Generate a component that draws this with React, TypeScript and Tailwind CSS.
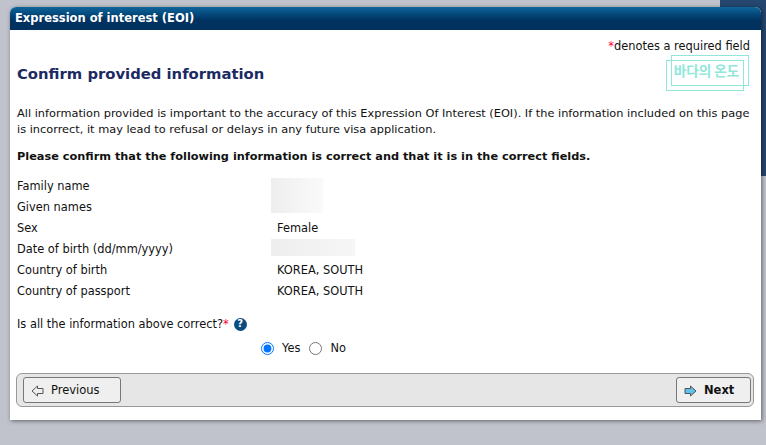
import React from 'react';

const fontStack = { fontFamily: '"DejaVu Sans", Verdana, sans-serif' };

const rows = [
  { label: 'Family name', value: '' },
  { label: 'Given names', value: '' },
  { label: 'Sex', value: 'Female' },
  { label: 'Date of birth (dd/mm/yyyy)', value: '' },
  { label: 'Country of birth', value: 'KOREA, SOUTH' },
  { label: 'Country of passport', value: 'KOREA, SOUTH' },
];

const ArrowLeft = () => (
  <svg width="13" height="12" viewBox="0 0 13 12">
    <path d="M1 6 L6.5 1 V3.5 H12 V8.5 H6.5 V11 Z" fill="#efefef" stroke="#555" strokeWidth="1" />
  </svg>
);

const ArrowRight = () => (
  <svg width="13" height="12" viewBox="0 0 13 12">
    <path d="M12 6 L6.5 1 V3.5 H1 V8.5 H6.5 V11 Z" fill="#5fc0ea" stroke="#555" strokeWidth="1" />
  </svg>
);

export default function App() {
  return (
    <div className="relative h-[445px] w-[766px] overflow-hidden bg-[#c0c3cc] pt-[7px] pl-[10px] pr-[5px] text-[11.4px] text-[#111]" style={fontStack}>
      {/* top right backdrop */}
      <div className="absolute right-0 top-0 h-[176px] w-[46px] bg-[#24466f]" />

      <div className="relative h-[413px] w-[751px] rounded-t-[6px] bg-white shadow-[1px_1px_4px_rgba(0,0,0,0.5)]">
        <div className="flex h-[23px] items-center rounded-t-[6px] bg-gradient-to-b from-[#0f659b] to-[#00315f] to-60% pl-[5px] text-[11.5px] font-bold text-white">
          Expression of interest (EOI)
        </div>

        <div className="px-[7px]">
          <div className="pt-[9px] pr-[4px] text-right leading-[15px]">
            <span className="text-[#ff0033]">*</span>denotes a required field
          </div>

          <h1 className="mt-[6px] text-[14.8px] font-bold leading-[28px] text-[#1b2a63]">Confirm provided information</h1>

          <p className="mt-[17px] text-[11.35px] leading-[16px]">
            All information provided is important to the accuracy of this Expression Of Interest (EOI). If the information included on this page is incorrect, it may lead to refusal or delays in any future visa application.
          </p>

          <p className="mt-[12px] text-[11.3px] font-bold leading-[16px]">
            Please confirm that the following information is correct and that it is in the correct fields.
          </p>

          <div className="mt-[11px] flex flex-col">
            {rows.map((row) => (
              <div key={row.label} className="flex h-[21px] items-center">
                <div className="w-[260px]">{row.label}</div>
                <div>{row.value}</div>
              </div>
            ))}
          </div>

          <div className="mt-[14px] flex items-center leading-[16px]">
            Is all the information above correct?<span className="text-[#ff0033]">*</span>
            <span className="ml-[5px] flex h-[13px] w-[13px] items-center justify-center rounded-full bg-[#0b4c7f] text-[10px] font-bold text-white">?</span>
          </div>

          <div className="mt-[8px] flex items-center pl-[244px]">
            <input type="radio" defaultChecked name="ok" className="m-0 h-[13px] w-[13px]" />
            <span className="ml-[8px]">Yes</span>
            <input type="radio" name="ok" className="ml-[9px] h-[13px] w-[13px]" />
            <span className="ml-[8px]">No</span>
          </div>
        </div>

        <div className="absolute bottom-[13px] left-[6px] right-[7px] flex h-[34px] items-center justify-between rounded-[6px] border border-[#999] bg-[#e6e6e6] pl-[6px] pr-[2px]">
          <button className="flex h-[26px] w-[98px] items-center gap-[7px] rounded-[3px] border border-[#777] bg-[#efefef] pl-[7px] pt-[2px] text-[11.5px] text-[#111]">
            <ArrowLeft />
            Previous
          </button>
          <button className="flex h-[26px] w-[75px] items-center gap-[7px] rounded-[3px] border border-[#777] bg-[#efefef] pl-[7px] pt-[2px] text-[11.5px] font-bold text-[#111]">
            <ArrowRight />
            Next
          </button>
        </div>

        {/* watermark */}
        <div className="absolute left-[661px] top-[48px] h-[31px] w-[78px] border border-[#90e8da]" />
        <div className="absolute left-[656px] top-[53px] flex h-[31px] w-[78px] items-center justify-center border border-[#90e8da] pb-[10px] pl-[3px] text-[13.6px] font-bold text-[#90e8da]" style={{ fontFamily: '"Noto Sans CJK KR", sans-serif' }}>
          바다의 온도
        </div>

        {/* redacted values */}
        <div className="absolute left-[261px] top-[171px] h-[35px] w-[52px] bg-gradient-to-r from-[#eeeeee] to-[#fafafa]" />
        <div className="absolute left-[261px] top-[232px] h-[17px] w-[84px] bg-gradient-to-r from-[#eeeeee] to-[#f6f6f6]" />
      </div>
    </div>
  );
}
